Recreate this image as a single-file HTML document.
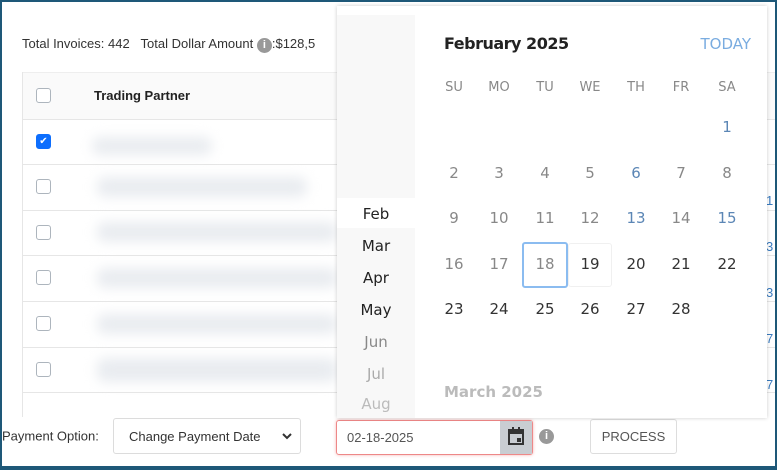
<!DOCTYPE html>
<html><head><style>
*{box-sizing:border-box;margin:0;padding:0}
body{width:777px;height:470px;overflow:hidden;background:#1e5878;font-family:"Liberation Sans",sans-serif;position:relative}
.main{position:absolute;left:2px;top:2px;width:773px;height:464px;background:#fff;overflow:hidden}
.abs{position:absolute}
.cb{position:absolute;left:34px;width:15px;height:15px;border:1px solid #adb5bd;border-radius:3px;background:#fff}
.row{position:absolute;left:20px;width:760px;height:1px;background:#e6e6e6}
.blur{position:absolute;background:#e9ecf0;filter:blur(6px);border-radius:8px}
.d{position:absolute;width:44px;text-align:center;font-size:15px;color:#777;font-family:"DejaVu Sans","Liberation Sans",sans-serif}
.m{position:absolute;left:0;width:78px;text-align:center;font-size:15px;font-family:"DejaVu Sans",sans-serif}
</style></head><body>
<div class="main">
 <div class="abs" style="left:20px;top:34px;font-size:13px;color:#333">Total Invoices: 442&nbsp;&nbsp;&nbsp;Total Dollar Amount <span style="display:inline-block;width:15px;height:15px;border-radius:50%;background:#999;color:#fff;font-size:11px;text-align:center;line-height:15px;font-weight:bold">i</span>:$128,5</div>
 <div class="abs" style="left:20px;top:70px;width:760px;height:47px;background:#fafafa;border-top:1px solid #eee"></div>
 <div class="abs" style="left:92px;top:86px;font-size:13px;font-weight:bold;color:#222">Trading Partner</div>
 <div class="cb" style="top:86px"></div>
 <div class="row" style="top:117px"></div><div class="row" style="top:162px"></div><div class="row" style="top:208px"></div><div class="row" style="top:253px"></div><div class="row" style="top:299px"></div><div class="row" style="top:345px"></div><div class="row" style="top:390px"></div>
 <div class="abs" style="left:20px;top:70px;width:1px;height:345px;background:#e6e6e6"></div>
 <div class="cb" style="top:132px;background:#0d6efd;border-color:#0d6efd;color:#fff;font-size:10px;text-align:center;line-height:13px">✔</div>
 <div class="cb" style="top:177px"></div><div class="cb" style="top:223px"></div><div class="cb" style="top:268px"></div><div class="cb" style="top:314px"></div><div class="cb" style="top:360px"></div>
 <div class="blur" style="left:90px;top:135px;width:120px;height:18px"></div>
 <div class="blur" style="left:95px;top:175px;width:210px;height:20px"></div>
 <div class="blur" style="left:95px;top:220px;width:240px;height:20px"></div>
 <div class="blur" style="left:95px;top:266px;width:240px;height:20px"></div>
 <div class="blur" style="left:95px;top:312px;width:240px;height:20px"></div>
 <div class="blur" style="left:95px;top:356px;width:240px;height:24px"></div>
 <div class="abs" style="left:764px;top:176px;color:#3a7bbf;font-size:13px;line-height:46px">1<br>3<br>3<br>7<br>7</div>
 <div class="abs" style="left:0;top:434px;font-size:13px;color:#333;transform:translateY(-50%)">Payment Option:</div>
 <div class="abs" style="left:111px;top:416px;width:188px;height:36px;border:1px solid #dcdcdc;border-radius:3px;font-size:13px;color:#333;padding:10px 0 0 15px">Change Payment Date<svg style="position:absolute;right:8px;top:14px" width="10" height="7" viewBox="0 0 10 7"><path d="M1 1l4 4 4-4" fill="none" stroke="#333" stroke-width="2"/></svg></div>
 <div class="abs" style="left:334px;top:418px;width:197px;height:35px;border:1px solid #e88;border-radius:3px;box-shadow:0 0 3px #f3b5b5;font-size:13px;color:#555;padding:9px 0 0 10px">02-18-2025</div>
 <div class="abs" style="left:498px;top:419px;width:32px;height:33px;background:#c9cdd2"></div>
 <svg class="abs" style="left:505px;top:425px" width="18" height="20" viewBox="0 0 18 20"><rect x="2" y="3" width="14" height="14" fill="none" stroke="#333" stroke-width="2"/><rect x="2" y="3" width="14" height="4" fill="#333"/><rect x="5" y="0" width="2" height="4" fill="#333"/><rect x="11" y="0" width="2" height="4" fill="#333"/><rect x="10" y="11" width="4" height="4" fill="#333"/></svg>
 <div class="abs" style="left:537px;top:427px;width:15px;height:15px;border-radius:50%;background:#999;color:#fff;font-size:11px;text-align:center;line-height:15px;font-weight:bold">i</div>
 <div class="abs" style="left:588px;top:417px;width:87px;height:35px;border:1px solid #ddd;border-radius:3px;font-size:13px;color:#555;text-align:center;line-height:33px">PROCESS</div>
 <!-- popup -->
 <div class="abs" style="left:335px;top:4px;width:430px;height:412px;background:#fff;box-shadow:0 0 4px rgba(0,0,0,.2);overflow:hidden">
  <div class="abs" style="left:0;top:9px;width:78px;height:403px;background:#f8f8f8"></div>
  <div class="abs" style="left:0;top:192px;width:78px;height:30px;background:#fff"></div>
  <div class="m" style="top:199px;color:#222">Feb</div>
  <div class="m" style="top:231px;color:#222">Mar</div>
  <div class="m" style="top:263px;color:#222">Apr</div>
  <div class="m" style="top:295px;color:#222">May</div>
  <div class="m" style="top:327px;color:#888">Jun</div>
  <div class="m" style="top:359px;color:#aaa">Jul</div>
  <div class="m" style="top:389px;color:#bbb">Aug</div>
  <div class="abs" style="left:107px;top:28px;font-size:16px;font-weight:bold;color:#222;font-family:'DejaVu Sans',sans-serif;letter-spacing:-0.5px">February 2025</div>
  <div class="abs" style="right:16px;top:29px;font-size:15px;color:#7aace0;font-family:'DejaVu Sans',sans-serif">TODAY</div>
  <div class="abs" style="left:107px;top:377px;font-size:15px;font-weight:bold;color:#bbb;font-family:'DejaVu Sans',sans-serif">March 2025</div>
  <div class="abs" style="left:185px;top:236px;width:46px;height:46px;border:2px solid #8bbcf0;border-radius:3px"></div>
  <div class="abs" style="left:231px;top:237px;width:44px;height:44px;border:1px solid #f0f0f0;border-radius:3px"></div>
  <div id="g"></div>
 </div>
</div>
<script>
var g=document.getElementById('g'),cx=[117,162,208,253,299,344,390],h='';
['SU','MO','TU','WE','TH','FR','SA'].forEach(function(t,i){h+='<div class="d" style="left:'+(cx[i]-22)+'px;top:74px;font-size:13px;color:#888">'+t+'</div>';});
var ry=[112,158,203,249,294];
for(var n=1;n<=28;n++){var p=n+5,r=Math.floor(p/7),c=p%7;var col=n>=19?'#333':'#888';if(n==6||n==13||n==15||n==1)col='#5b86b5';
h+='<div class="d" style="left:'+(cx[c]-22)+'px;top:'+ry[r]+'px;color:'+col+'">'+n+'</div>';}
g.innerHTML=h;
</script>
</body></html>
